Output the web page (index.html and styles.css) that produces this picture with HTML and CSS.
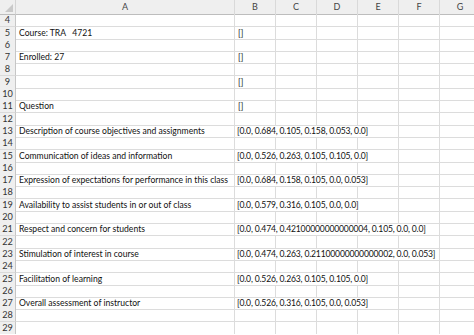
FILE: index.html
```html
<!DOCTYPE html>
<html>
<head>
<meta charset="utf-8">
<link rel="stylesheet" href="styles.css">
</head>
<body>
<div class="sheet">
  <div class="row head">
    <div class="corner"><span class="tri"></span></div>
    <div class="ch">A</div><div class="ch">B</div><div class="ch">C</div><div class="ch">D</div><div class="ch">E</div><div class="ch">F</div><div class="ch">G</div>
  </div>
  <div class="row"><div class="rh">4</div><div class="c"></div><div class="c"></div><div class="c"></div><div class="c"></div><div class="c"></div><div class="c"></div><div class="c"></div></div>
  <div class="row"><div class="rh">5</div><div class="c">Course: TRA&nbsp;&nbsp; 4721</div><div class="c">[]</div><div class="c"></div><div class="c"></div><div class="c"></div><div class="c"></div><div class="c"></div></div>
  <div class="row"><div class="rh">6</div><div class="c"></div><div class="c"></div><div class="c"></div><div class="c"></div><div class="c"></div><div class="c"></div><div class="c"></div></div>
  <div class="row"><div class="rh">7</div><div class="c">Enrolled: 27</div><div class="c">[]</div><div class="c"></div><div class="c"></div><div class="c"></div><div class="c"></div><div class="c"></div></div>
  <div class="row"><div class="rh">8</div><div class="c"></div><div class="c"></div><div class="c"></div><div class="c"></div><div class="c"></div><div class="c"></div><div class="c"></div></div>
  <div class="row"><div class="rh">9</div><div class="c"></div><div class="c">[]</div><div class="c"></div><div class="c"></div><div class="c"></div><div class="c"></div><div class="c"></div></div>
  <div class="row"><div class="rh">10</div><div class="c"></div><div class="c"></div><div class="c"></div><div class="c"></div><div class="c"></div><div class="c"></div><div class="c"></div></div>
  <div class="row"><div class="rh">11</div><div class="c">Question</div><div class="c">[]</div><div class="c"></div><div class="c"></div><div class="c"></div><div class="c"></div><div class="c"></div></div>
  <div class="row"><div class="rh">12</div><div class="c"></div><div class="c"></div><div class="c"></div><div class="c"></div><div class="c"></div><div class="c"></div><div class="c"></div></div>
  <div class="row"><div class="rh">13</div><div class="c">Description of course objectives and assignments</div><div class="c num s4">[0.0, 0.684, 0.105, 0.158, 0.053, 0.0]</div><div class="c"></div><div class="c"></div></div>
  <div class="row"><div class="rh">14</div><div class="c"></div><div class="c"></div><div class="c"></div><div class="c"></div><div class="c"></div><div class="c"></div><div class="c"></div></div>
  <div class="row"><div class="rh">15</div><div class="c">Communication of ideas and information</div><div class="c num s4">[0.0, 0.526, 0.263, 0.105, 0.105, 0.0]</div><div class="c"></div><div class="c"></div></div>
  <div class="row"><div class="rh">16</div><div class="c"></div><div class="c"></div><div class="c"></div><div class="c"></div><div class="c"></div><div class="c"></div><div class="c"></div></div>
  <div class="row"><div class="rh">17</div><div class="c">Expression of expectations for performance in this class</div><div class="c num s4">[0.0, 0.684, 0.158, 0.105, 0.0, 0.053]</div><div class="c"></div><div class="c"></div></div>
  <div class="row"><div class="rh">18</div><div class="c"></div><div class="c"></div><div class="c"></div><div class="c"></div><div class="c"></div><div class="c"></div><div class="c"></div></div>
  <div class="row"><div class="rh">19</div><div class="c">Availability to assist students in or out of class</div><div class="c num s4">[0.0, 0.579, 0.316, 0.105, 0.0, 0.0]</div><div class="c"></div><div class="c"></div></div>
  <div class="row"><div class="rh">20</div><div class="c"></div><div class="c"></div><div class="c"></div><div class="c"></div><div class="c"></div><div class="c"></div><div class="c"></div></div>
  <div class="row"><div class="rh">21</div><div class="c">Respect and concern for students</div><div class="c num s5">[0.0, 0.474, 0.42100000000000004, 0.105, 0.0, 0.0]</div><div class="c"></div></div>
  <div class="row"><div class="rh">22</div><div class="c"></div><div class="c"></div><div class="c"></div><div class="c"></div><div class="c"></div><div class="c"></div><div class="c"></div></div>
  <div class="row"><div class="rh">23</div><div class="c">Stimulation of interest in course</div><div class="c num s5">[0.0, 0.474, 0.263, 0.21100000000000002, 0.0, 0.053]</div><div class="c"></div></div>
  <div class="row"><div class="rh">24</div><div class="c"></div><div class="c"></div><div class="c"></div><div class="c"></div><div class="c"></div><div class="c"></div><div class="c"></div></div>
  <div class="row"><div class="rh">25</div><div class="c">Facilitation of learning</div><div class="c num s4">[0.0, 0.526, 0.263, 0.105, 0.105, 0.0]</div><div class="c"></div><div class="c"></div></div>
  <div class="row"><div class="rh">26</div><div class="c"></div><div class="c"></div><div class="c"></div><div class="c"></div><div class="c"></div><div class="c"></div><div class="c"></div></div>
  <div class="row"><div class="rh">27</div><div class="c">Overall assessment of instructor</div><div class="c num s4">[0.0, 0.526, 0.316, 0.105, 0.0, 0.053]</div><div class="c"></div><div class="c"></div></div>
  <div class="row"><div class="rh">28</div><div class="c"></div><div class="c"></div><div class="c"></div><div class="c"></div><div class="c"></div><div class="c"></div><div class="c"></div></div>
  <div class="row"><div class="rh">29</div><div class="c"></div><div class="c"></div><div class="c"></div><div class="c"></div><div class="c"></div><div class="c"></div><div class="c"></div></div>
</div>
</body>
</html>
```
FILE: styles.css
```css
html, body {
  margin: 0;
  padding: 0;
  background: #ffffff;
  overflow: hidden;
}
.sheet {
  width: 481px;
  font-family: Lato, "Liberation Sans", sans-serif;
  font-size: 8.6px;
  color: #111;
}
.row {
  display: grid;
  grid-template-columns: 16px 219px 41px 41px 41px 41px 41px 41px;
  height: 12.3px;
}
.row.head {
  height: 14.3px;
}
.corner {
  background: #efefef;
  border-right: 1px solid #d4d4d4;
  border-bottom: 1px solid #bdbdbd;
  position: relative;
  box-sizing: border-box;
}
.tri {
  position: absolute;
  right: 2px;
  bottom: 2px;
  width: 0;
  height: 0;
  border-left: 8px solid transparent;
  border-bottom: 8px solid #c9c9c9;
}
.ch {
  background: #efefef;
  border-right: 1px solid #d9d9d9;
  border-bottom: 1px solid #bdbdbd;
  box-sizing: border-box;
  color: #444;
  text-align: center;
  line-height: 14px;
  font-size: 9px;
}
.rh {
  background: #efefef;
  border-right: 1px solid #c6c6c6;
  border-bottom: 1px solid #dadada;
  box-sizing: border-box;
  color: #333;
  text-align: center;
  line-height: 12px;
  font-size: 9.2px;
}
.c {
  border-right: 1px solid #dcdcdc;
  border-bottom: 1px solid #dcdcdc;
  box-sizing: border-box;
  padding-left: 3px;
  line-height: 12px;
  white-space: pre;
}
.num {
  padding-left: 2px;
  letter-spacing: -0.18px;
}
.s4 {
  grid-column: span 4;
}
.s5 {
  grid-column: span 5;
}
```
